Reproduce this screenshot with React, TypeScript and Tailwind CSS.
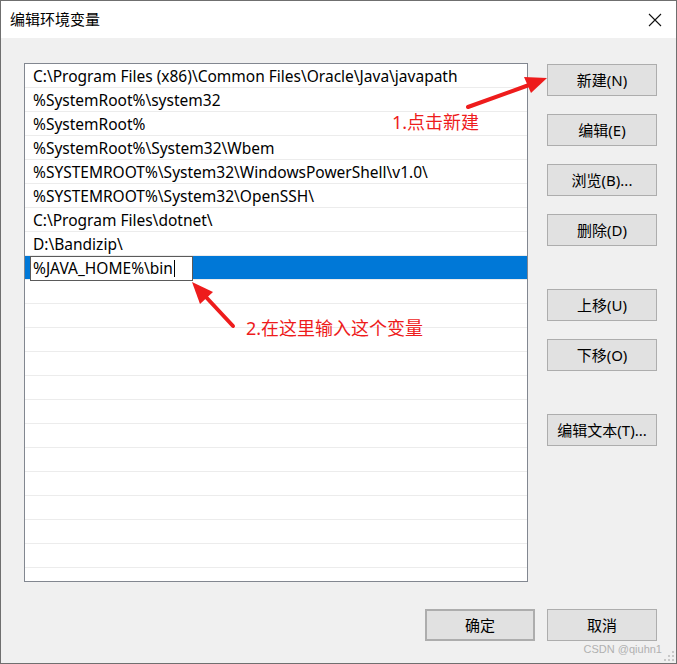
import React from 'react';

const paths = [
  'C:\\Program Files (x86)\\Common Files\\Oracle\\Java\\javapath',
  '%SystemRoot%\\system32',
  '%SystemRoot%',
  '%SystemRoot%\\System32\\Wbem',
  '%SYSTEMROOT%\\System32\\WindowsPowerShell\\v1.0\\',
  '%SYSTEMROOT%\\System32\\OpenSSH\\',
  'C:\\Program Files\\dotnet\\',
  'D:\\Bandizip\\',
];

const font = { fontFamily: '"Noto Sans", "Noto Sans CJK SC", sans-serif' };

const Btn = ({ label, className = '' }: { label: string; className?: string }) => (
  <div
    className={`w-[110px] h-[32px] flex items-center justify-center bg-[#e1e1e1] border border-[#adadad] text-[15px] text-black ${className}`}
  >
    {label}
  </div>
);

export default function App() {
  const emptyRows = Array.from({ length: 13 });
  return (
    <div
      className="relative w-[677px] h-[664px] flex flex-col border border-[#6f6f6f] bg-[#f0f0f0] overflow-hidden"
      style={font}
    >
      {/* title bar */}
      <div className="h-[37px] bg-white flex items-center justify-between pl-[9px] pr-[14px]">
        <span className="text-[15px] text-black">编辑环境变量</span>
        <svg width="14" height="14" viewBox="0 0 14 14" className="mt-[1px]">
          <path d="M1 1L13 13M13 1L1 13" stroke="#111" strokeWidth="1.1" />
        </svg>
      </div>

      {/* body */}
      <div className="flex-1 flex flex-col pl-[23px] pt-[25px]">
        <div className="flex">
          <div className="w-[504px] h-[519px] border border-[#828790] bg-white overflow-hidden">
            {paths.map((p) => (
              <div
                key={p}
                className="h-[24px] flex items-center pl-[8px] pt-[2px] border-b border-[#ececec] text-[15.5px] text-black whitespace-nowrap"
              >
                {p}
              </div>
            ))}
            <div className="h-[24px] flex items-center bg-[#0078d7] pl-[5px] border-b border-[#ececec]">
              <div className="w-[163px] h-[25px] mt-[1px] bg-white border border-[#5a5a5a] flex items-center pl-[2px] pt-[1px] text-[15.5px] text-black whitespace-nowrap">
                %JAVA_HOME%\bin
                <span className="inline-block w-[1px] h-[17px] bg-black ml-[1px]" />
              </div>
            </div>
            {emptyRows.map((_, i) => (
              <div key={i} className="h-[24px] border-b border-[#ececec]" />
            ))}
          </div>

          <div className="ml-[19px] mt-[1px] flex flex-col">
            <Btn label="新建(N)" />
            <Btn label="编辑(E)" className="mt-[18px]" />
            <Btn label="浏览(B)..." className="mt-[18px]" />
            <Btn label="删除(D)" className="mt-[18px]" />
            <Btn label="上移(U)" className="mt-[43px]" />
            <Btn label="下移(O)" className="mt-[18px]" />
            <Btn label="编辑文本(T)..." className="mt-[43px]" />
          </div>
        </div>

        <div className="flex justify-end gap-[12px] pr-[19px] mt-[27px]">
          <Btn label="确定" className="border-2 border-[#0078d7]" />
          <Btn label="取消" />
        </div>
      </div>

      {/* watermark */}
      <div
        className="absolute right-[14px] bottom-[6px] text-[11px] text-[#b0b0b0]"
        style={{ fontFamily: '"Liberation Sans", sans-serif' }}
      >
        CSDN @qiuhn1
      </div>
      <svg className="absolute right-[1px] bottom-[1px]" width="12" height="12" viewBox="0 0 12 12">
        <rect x="9" y="1" width="2" height="2" fill="#c8c8c8" />
        <rect x="5" y="5" width="2" height="2" fill="#c8c8c8" />
        <rect x="9" y="5" width="2" height="2" fill="#c8c8c8" />
        <rect x="1" y="9" width="2" height="2" fill="#c8c8c8" />
        <rect x="5" y="9" width="2" height="2" fill="#c8c8c8" />
        <rect x="9" y="9" width="2" height="2" fill="#c8c8c8" />
      </svg>

      {/* annotations */}
      <svg className="absolute left-0 top-0 pointer-events-none" width="677" height="664">
        <line x1="467" y1="106" x2="528" y2="84" stroke="#ee1c1c" strokeWidth="4" strokeLinecap="round" />
        <polygon points="546,77 523,76 530,92" fill="#ee1c1c" />
        <line x1="232" y1="325" x2="204" y2="295" stroke="#ee1c1c" strokeWidth="4" strokeLinecap="round" />
        <polygon points="191,281 199,303 212,291" fill="#ee1c1c" />
      </svg>
      <div className="absolute left-[391px] top-[112px] text-[18px] text-[#ee1c1c] leading-none">1.点击新建</div>
      <div className="absolute left-[245px] top-[318px] text-[18px] text-[#ee1c1c] leading-none">2.在这里输入这个变量</div>
    </div>
  );
}
